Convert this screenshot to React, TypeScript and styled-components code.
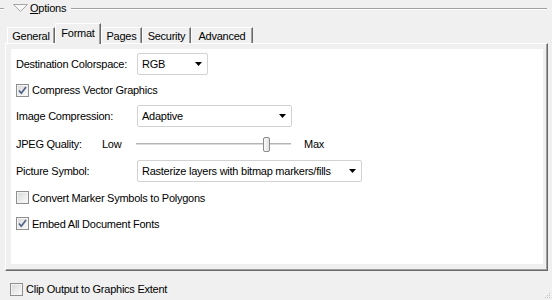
import React from "react";
import styled, { createGlobalStyle } from "styled-components";

const Global = createGlobalStyle`
  html, body { margin: 0; padding: 0; background: #f0f0f0; }
  body {
    font-family: "Liberation Sans", Arial, sans-serif;
    font-size: 11px;
    letter-spacing: -0.25px;
    color: #000;
  }
`;

const Window = styled.div`
  position: relative;
  width: 552px;
  height: 300px;
  box-sizing: border-box;
  background: #f0f0f0;
  overflow: hidden;
  display: flex;
  flex-direction: column;
`;

const GroupHeader = styled.div`
  display: flex;
  align-items: center;
  height: 16px;
  padding-right: 5px;
`;

const Etch = styled.div<{ $grow?: boolean }>`
  height: 1px;
  background: #a0a0a0;
  border-bottom: 1px solid #ffffff;
  margin-top: 1px;
  ${(p) => (p.$grow ? "flex: 1; margin-left: 5px;" : "width: 4px; margin-left: 0;")}
`;

const Toggle = styled.svg`
  width: 15px;
  height: 8px;
  margin: 0 2px 0 9px;
`;

const GroupTitle = styled.span`
  line-height: 16px;
  u { text-decoration: underline; text-underline-offset: 1px; }
`;

const TabStrip = styled.div`
  display: flex;
  align-items: flex-end;
  height: 20px;
  margin-top: 7px;
  padding-left: 7px;
  position: relative;
  z-index: 1;
`;

const Tab = styled.div<{ $active?: boolean; $w: number }>`
  width: ${(p) => p.$w}px;
  height: ${(p) => (p.$active ? 21 : 16)}px;
  margin-bottom: ${(p) => (p.$active ? -1 : 0)}px;
  padding-bottom: ${(p) => (p.$active ? 2 : 0)}px;
  box-sizing: border-box;
  display: flex;
  align-items: center;
  justify-content: center;
  background: #f0f0f0;
  border-top: 1px solid #ffffff;
  border-left: 1px solid #ffffff;
  border-right: 1px solid #696969;
  box-shadow: inset -1px 0 0 #a0a0a0;
  white-space: nowrap;
`;

const TabPage = styled.div`
  margin-left: 5px;
  width: 543px;
  height: 228px;
  box-sizing: border-box;
  border-top: 1px solid #ffffff;
  border-left: 1px solid #ffffff;
  border-right: 1px solid #696969;
  border-bottom: 1px solid #696969;
  box-shadow: inset -1px -1px 0 #a0a0a0;
  padding: 5px 4px 6px 5px;
  display: flex;
`;

const Panel = styled.div`
  flex: 1;
  background: #ffffff;
  display: flex;
  flex-direction: column;
  gap: 5px;
  padding: 4px 0 0 5px;
`;

const FormRow = styled.div<{ $h: number }>`
  height: ${(p) => p.$h}px;
  display: grid;
  grid-template-columns: 121px auto;
  align-items: center;
  justify-items: start;
`;

const SliderRow = styled.div<{ $h: number }>`
  height: ${(p) => p.$h}px;
  display: flex;
  align-items: center;
`;

const Label = styled.span<{ $w?: number }>`
  white-space: nowrap;
  ${(p) => (p.$w ? `width: ${p.$w}px; flex: none;` : "")}
`;

const Select = styled.div<{ $w: number }>`
  width: ${(p) => p.$w}px;
  height: 22px;
  box-sizing: border-box;
  border: 1px solid #d2d2d2;
  border-radius: 2px;
  background: #ffffff;
  display: flex;
  align-items: center;
  justify-content: space-between;
  padding: 0 5px 0 4px;
  white-space: nowrap;
`;

const Arrow = styled.svg`
  width: 7px;
  height: 4px;
  flex: none;
`;

const CheckRow = styled.label<{ $h: number }>`
  height: ${(p) => p.$h}px;
  display: flex;
  align-items: center;
  gap: 3px;
  white-space: nowrap;
`;

const Box = styled.span`
  width: 13px;
  height: 13px;
  box-sizing: border-box;
  flex: none;
  border: 1px solid #8e8f8f;
  background: linear-gradient(135deg, #d6d6d6 0%, #ececec 55%, #fbfbfb 100%);
  box-shadow: inset 0 0 0 1px #f4f4f4;
  display: flex;
  align-items: center;
  justify-content: center;
`;

const Track = styled.div`
  position: relative;
  width: 155px;
  height: 22px;
  flex: none;
  display: flex;
  align-items: center;
`;

const TrackLine = styled.div`
  width: 100%;
  height: 1px;
  background: #b4b4b4;
  border-bottom: 1px solid #dcdcdc;
`;

const Thumb = styled.div`
  position: absolute;
  top: 4px;
  width: 7px;
  height: 15px;
  box-sizing: border-box;
  border: 1px solid #8a8a8a;
  border-radius: 2px;
  background: linear-gradient(90deg, #f8f8f8, #e2e2e2);
`;

const MaxLabel = styled.span`
  margin-left: 13px;
`;

const Footer = styled.div`
  margin-top: 8px;
  padding-left: 10px;
`;

const Grip = styled.svg`
  position: absolute;
  right: 1px;
  bottom: 1px;
  width: 6px;
  height: 6px;
`;

const Check: React.FC<{ checked?: boolean }> = ({ checked }) => (
  <Box>
    {checked && (
      <svg width="9" height="9" viewBox="0 0 9 9">
        <polyline
          points="1,4.5 3.3,7.2 8,1"
          fill="none"
          stroke="#4d6185"
          strokeWidth="1.7"
        />
      </svg>
    )}
  </Box>
);

const DownArrow = () => (
  <Arrow viewBox="0 0 7 4">
    <polygon points="0,0 7,0 3.5,4" fill="#000" />
  </Arrow>
);

const Dropdown: React.FC<{ w: number; value: string }> = ({ w, value }) => (
  <Select $w={w}>
    <span>{value}</span>
    <DownArrow />
  </Select>
);

export default function App() {
  return (
    <Window>
      <Global />
      <GroupHeader>
        <Etch />
        <Toggle viewBox="0 0 15 8">
          <polygon points="0.5,0.5 14.5,0.5 7.5,7.5" fill="#f7f7f7" stroke="#a6a6a6" strokeWidth="1" />
        </Toggle>
        <GroupTitle>
          <u>O</u>ptions
        </GroupTitle>
        <Etch $grow />
      </GroupHeader>

      <TabStrip>
        <Tab $w={48}>General</Tab>
        <Tab $w={46} $active>
          Format
        </Tab>
        <Tab $w={41}>Pages</Tab>
        <Tab $w={49}>Security</Tab>
        <Tab $w={62}>Advanced</Tab>
      </TabStrip>

      <TabPage>
        <Panel>
          <FormRow $h={22}>
            <Label>Destination Colorspace:</Label>
            <Dropdown w={71} value="RGB" />
          </FormRow>
          <CheckRow $h={20}>
            <Check checked />
            Compress Vector Graphics
          </CheckRow>
          <FormRow $h={22}>
            <Label>Image Compression:</Label>
            <Dropdown w={155} value="Adaptive" />
          </FormRow>
          <SliderRow $h={23}>
            <Label $w={86}>JPEG Quality:</Label>
            <Label $w={34}>Low</Label>
            <Track>
              <TrackLine />
              <Thumb style={{ left: 127 }} />
            </Track>
            <MaxLabel>Max</MaxLabel>
          </SliderRow>
          <FormRow $h={22}>
            <Label>Picture Symbol:</Label>
            <Dropdown w={225} value="Rasterize layers with bitmap markers/fills" />
          </FormRow>
          <CheckRow $h={21}>
            <Check />
            Convert Marker Symbols to Polygons
          </CheckRow>
          <CheckRow $h={21}>
            <Check checked />
            Embed All Document Fonts
          </CheckRow>
        </Panel>
      </TabPage>

      <Footer>
        <CheckRow $h={20}>
          <Check />
          Clip Output to Graphics Extent
        </CheckRow>
      </Footer>

      <Grip viewBox="0 0 6 6">
        <rect x="4" y="0" width="1" height="1" fill="#c0c0c0" />
        <rect x="2" y="2" width="1" height="1" fill="#c0c0c0" />
        <rect x="4" y="2" width="1" height="1" fill="#c0c0c0" />
        <rect x="0" y="4" width="1" height="1" fill="#c0c0c0" />
        <rect x="2" y="4" width="1" height="1" fill="#c0c0c0" />
        <rect x="4" y="4" width="1" height="1" fill="#c0c0c0" />
      </Grip>
    </Window>
  );
}
